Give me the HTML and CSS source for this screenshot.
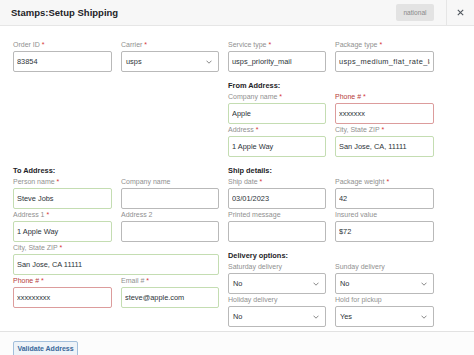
FILE: index.html
```html
<!DOCTYPE html>
<html>
<head>
<meta charset="utf-8">
<link rel="stylesheet" href="styles.css">
</head>
<body>
<div class="modal">
  <header class="head">
    <h1 class="title">Stamps:Setup Shipping</h1>
    <span class="badge">national</span>
    <div class="close">
      <svg width="7" height="7" viewBox="0 0 7 7"><path d="M0.8 0.8L6.2 6.2M6.2 0.8L0.8 6.2" stroke="#50575e" stroke-width="1.1" fill="none"/></svg>
    </div>
  </header>
  <main class="body">
    <div class="row4">
      <label class="field"><span class="lbl">Order ID <b class="req">*</b></span><input class="inp" value="83854"></label>
      <label class="field"><span class="lbl">Carrier <b class="req">*</b></span><span class="inp sel">usps<svg class="chev" width="6" height="4" viewBox="0 0 6 4"><path d="M0.5 0.7L3 3.2L5.5 0.7" stroke="#7a7a7a" stroke-width="0.9" fill="none"/></svg></span></label>
      <label class="field"><span class="lbl">Service type <b class="req">*</b></span><input class="inp" value="usps_priority_mail"></label>
      <label class="field"><span class="lbl">Package type <b class="req">*</b></span><input class="inp wide-text" value="usps_medium_flat_rate_large_box"></label>
    </div>

    <div class="split">
      <div class="half"></div>
      <section class="half group">
        <h2 class="gh">From Address:</h2>
        <div class="grid2">
          <label class="field"><span class="lbl">Company name <b class="req">*</b></span><input class="inp ok" value="Apple"></label>
          <label class="field"><span class="lbl bad">Phone # <b class="req">*</b></span><input class="inp err" value="xxxxxxx"></label>
          <label class="field"><span class="lbl">Address <b class="req">*</b></span><input class="inp ok" value="1 Apple Way"></label>
          <label class="field"><span class="lbl">City, State ZIP <b class="req">*</b></span><input class="inp ok" value="San Jose, CA, 11111"></label>
        </div>
      </section>
    </div>

    <div class="split">
      <section class="half group">
        <h2 class="gh">To Address:</h2>
        <div class="grid2">
          <label class="field"><span class="lbl">Person name <b class="req">*</b></span><input class="inp ok" value="Steve Jobs"></label>
          <label class="field"><span class="lbl">Company name</span><input class="inp" value=""></label>
          <label class="field"><span class="lbl">Address 1 <b class="req">*</b></span><input class="inp ok" value="1 Apple Way"></label>
          <label class="field"><span class="lbl">Address 2</span><input class="inp" value=""></label>
          <label class="field wide"><span class="lbl">City, State ZIP <b class="req">*</b></span><input class="inp ok" value="San Jose, CA 11111"></label>
          <label class="field"><span class="lbl bad">Phone # <b class="req">*</b></span><input class="inp err" value="xxxxxxxxx"></label>
          <label class="field"><span class="lbl">Email # <b class="req">*</b></span><input class="inp ok" value="steve@apple.com"></label>
        </div>
      </section>
      <div class="half">
        <section class="group">
          <h2 class="gh">Ship details:</h2>
          <div class="grid2">
            <label class="field"><span class="lbl">Ship date <b class="req">*</b></span><input class="inp" value="03/01/2023"></label>
            <label class="field"><span class="lbl">Package weight <b class="req">*</b></span><input class="inp" value="42"></label>
            <label class="field"><span class="lbl">Printed message</span><input class="inp" value=""></label>
            <label class="field"><span class="lbl">Insured value</span><input class="inp" value="$72"></label>
          </div>
        </section>
        <section class="group">
          <h2 class="gh">Delivery options:</h2>
          <div class="grid2">
            <label class="field"><span class="lbl">Saturday delivery</span><span class="inp sel">No<svg class="chev" width="6" height="4" viewBox="0 0 6 4"><path d="M0.5 0.7L3 3.2L5.5 0.7" stroke="#7a7a7a" stroke-width="0.9" fill="none"/></svg></span></label>
            <label class="field"><span class="lbl">Sunday delivery</span><span class="inp sel">No<svg class="chev" width="6" height="4" viewBox="0 0 6 4"><path d="M0.5 0.7L3 3.2L5.5 0.7" stroke="#7a7a7a" stroke-width="0.9" fill="none"/></svg></span></label>
            <label class="field"><span class="lbl">Holiday delivery</span><span class="inp sel">No<svg class="chev" width="6" height="4" viewBox="0 0 6 4"><path d="M0.5 0.7L3 3.2L5.5 0.7" stroke="#7a7a7a" stroke-width="0.9" fill="none"/></svg></span></label>
            <label class="field"><span class="lbl">Hold for pickup</span><span class="inp sel">Yes<svg class="chev" width="6" height="4" viewBox="0 0 6 4"><path d="M0.5 0.7L3 3.2L5.5 0.7" stroke="#7a7a7a" stroke-width="0.9" fill="none"/></svg></span></label>
          </div>
        </section>
      </div>
    </div>
  </main>
  <footer class="foot">
    <button class="validate">Validate Address</button>
  </footer>
</div>
</body>
</html>
```

FILE: styles.css
```css
* { box-sizing: border-box; }
html, body { margin: 0; padding: 0; background: #fff; }
body { font-family: "Liberation Sans", Arial, sans-serif; color: #1d2327; }

.modal { width: 474px; height: 355px; display: flex; flex-direction: column; overflow: hidden; }

.head {
  height: 26px;
  flex: none;
  display: flex;
  align-items: center;
  background: #f7f7f7;
  border-bottom: 1px solid #e6e6e6;
}
.title {
  margin: 0 0 0 11px;
  flex: 1;
  font-size: 9.5px;
  font-weight: 700;
  color: #1d2327;
}
.badge {
  height: 17px;
  width: 38px;
  display: flex;
  align-items: center;
  justify-content: center;
  background: #e3e3e3;
  border-radius: 2px;
  color: #8a8a8a;
  font-size: 6.6px;
  margin-right: 12px;
}
.close {
  width: 28px;
  height: 25px;
  border-left: 1px solid #e6e6e6;
  display: flex;
  align-items: center;
  justify-content: center;
}

.body { flex: 1; padding: 13px 0 4px 13px; }

.row4 {
  display: grid;
  grid-template-columns: 99px 98px 98px 99px;
  column-gap: 9px;
}
.split {
  display: grid;
  grid-template-columns: 206px 206px;
  column-gap: 9px;
}
.split > .group, .split > .half { margin-top: 9px; }
.half > .group + .group { margin-top: 9px; }

.gh {
  margin: 0;
  font-size: 7.4px;
  line-height: 10px;
  font-weight: 700;
  color: #1d2327;
}
.grid2 {
  display: grid;
  grid-template-columns: 98px 99px;
  column-gap: 9px;
}
.split > .half:first-child .grid2 { grid-template-columns: 99px 98px; }
.wide { grid-column: 1 / span 2; }

.field { display: flex; flex-direction: column; }
.lbl {
  height: 12px;
  line-height: 12px;
  font-size: 7px;
  color: #909090;
  white-space: nowrap;
}
.lbl.bad { color: #b53a3a; }
.req { color: #d63638; font-weight: 400; }

.inp {
  height: 21px;
  width: 100%;
  margin: 0;
  padding: 0 3px;
  border: 1px solid #b9b9b9;
  border-radius: 2px;
  background: #fff;
  font-family: "Liberation Sans", Arial, sans-serif;
  font-size: 7.4px;
  color: #2c3338;
  outline: none;
}
.inp.ok { border-color: #c4ddb2; }
.inp.err { border-color: #dc9c9c; }
.wide-text { letter-spacing: 0.35px; }
.sel {
  display: flex;
  align-items: center;
  justify-content: space-between;
  padding: 0 6px 0 4px;
}
.chev { display: block; }

.foot {
  flex: none;
  height: 24px;
  border-top: 1px solid #e2e2e2;
  background: #fcfcfc;
  padding: 5px 0 0 13px;
}
.validate {
  height: 16px;
  width: 65px;
  padding: 0;
  margin: 0;
  border: 1px solid #a3bfdb;
  border-radius: 2px;
  background: #eef3f8;
  color: #39679a;
  font-family: "Liberation Sans", Arial, sans-serif;
  font-size: 7px;
  font-weight: 700;
}
```
